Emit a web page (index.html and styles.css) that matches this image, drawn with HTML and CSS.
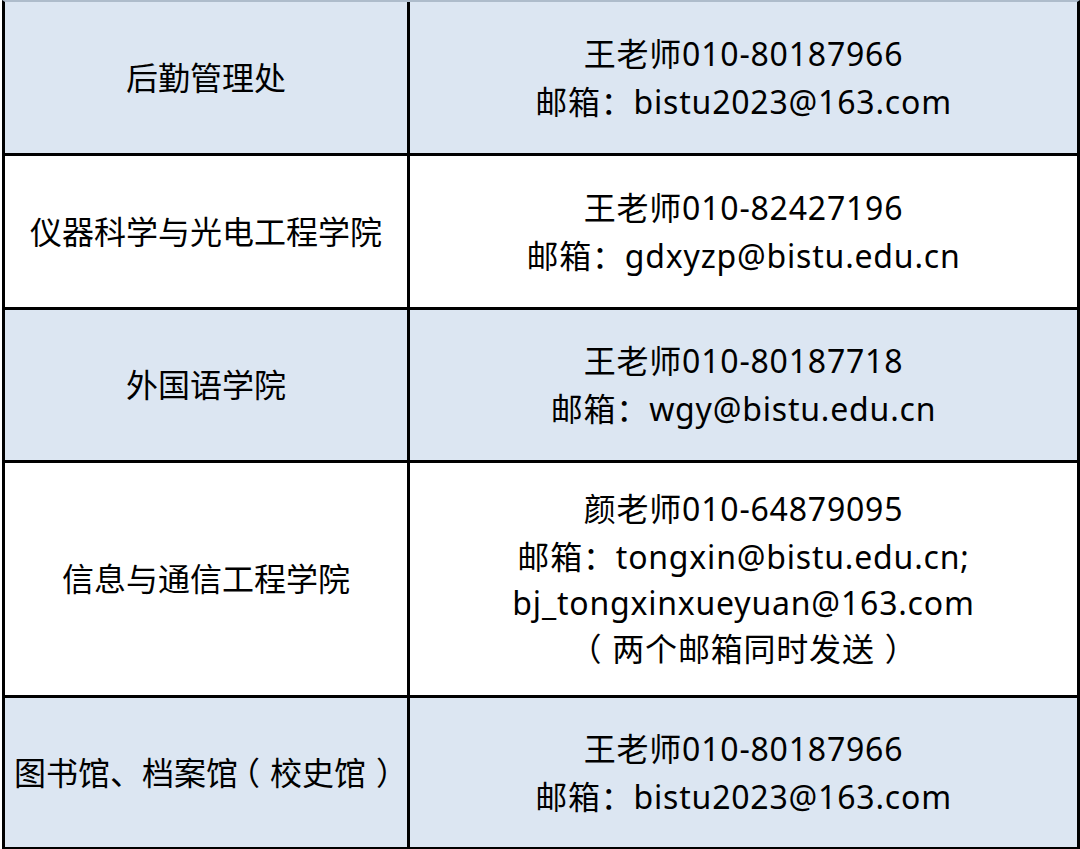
FILE: index.html
```html
<!DOCTYPE html>
<html lang="zh-CN">
<head>
<meta charset="utf-8">
<title>联系方式</title>
<link rel="stylesheet" href="styles.css">
</head>
<body>
<div class="table">
  <div class="cell blue name"><div>后勤管理处</div></div>
  <div class="cell blue info"><div>王老师010-80187966</div><div>邮箱<span class="colon">：</span>bistu2023@163.com</div></div>

  <div class="cell white name"><div>仪器科学与光电工程学院</div></div>
  <div class="cell white info"><div>王老师010-82427196</div><div>邮箱<span class="colon">：</span>gdxyzp@bistu.edu.cn</div></div>

  <div class="cell blue name"><div>外国语学院</div></div>
  <div class="cell blue info"><div>王老师010-80187718</div><div>邮箱<span class="colon">：</span>wgy@bistu.edu.cn</div></div>

  <div class="cell white name"><div>信息与通信工程学院</div></div>
  <div class="cell white info"><div>颜老师010-64879095</div><div>邮箱<span class="colon">：</span>tongxin@bistu.edu.cn;</div><div>bj_tongxinxueyuan@163.com</div><div><span class="po">（</span>两个邮箱同时发送<span class="pc">）</span></div></div>

  <div class="cell blue name"><div>图书馆、档案馆<span class="po">（</span>校史馆<span class="pc">）</span></div></div>
  <div class="cell blue info"><div>王老师010-80187966</div><div>邮箱<span class="colon">：</span>bistu2023@163.com</div></div>
</div>
</body>
</html>
```

FILE: styles.css
```css
html, body {
  margin: 0;
  padding: 0;
  background: #ffffff;
}
body {
  width: 1080px;
  height: 849px;
  overflow: hidden;
}
.table {
  box-sizing: border-box;
  width: 1078px;
  margin-left: 2px;
  display: grid;
  grid-template-columns: 402px 667px;
  grid-template-rows: 151px 151px 150px 232px 149px;
  column-gap: 3px;
  row-gap: 3px;
  background: #000000;
  border-left: 3px solid #000000;
  border-right: 3px solid #000000;
  border-top: 2px solid #aebccb;
  border-bottom: 2px solid #000000;
  font-family: "Noto Sans", "Noto Sans CJK SC", sans-serif;
  font-size: 32px;
  color: #000000;
}
.cell {
  display: flex;
  flex-direction: column;
  align-items: center;
  justify-content: center;
  text-align: center;
  line-height: 46px;
  white-space: nowrap;
}
.blue {
  background: #dce6f2;
}
.white {
  background: #ffffff;
}
.info {
  letter-spacing: 0.8px;
}
.colon {
  font-family: "Noto Sans CJK TC", sans-serif;
}
.po {
  display: inline-block;
  transform: translateX(-10px);
}
.pc {
  display: inline-block;
  transform: translateX(10px);
}
```
